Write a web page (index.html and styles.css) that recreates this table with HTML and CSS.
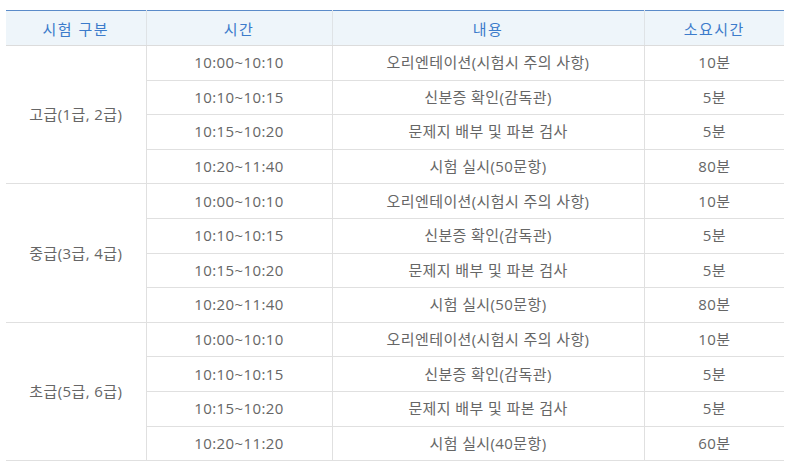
FILE: index.html
```html
<!DOCTYPE html>
<html lang="ko">
<head>
<meta charset="utf-8">
<link rel="stylesheet" href="styles.css">
</head>
<body>
<table class="sched">
  <colgroup>
    <col class="c1"><col class="c2"><col class="c3"><col class="c4">
  </colgroup>
  <thead>
    <tr><th>시험 구분</th><th>시간</th><th>내용</th><th>소요시간</th></tr>
  </thead>
  <tbody>
    <tr><td rowspan="4" class="grp">고급(1급, 2급)</td><td>10:00~10:10</td><td>오리엔테이션(시험시 주의 사항)</td><td>10분</td></tr>
    <tr><td>10:10~10:15</td><td>신분증 확인(감독관)</td><td>5분</td></tr>
    <tr><td>10:15~10:20</td><td>문제지 배부 및 파본 검사</td><td>5분</td></tr>
    <tr><td>10:20~11:40</td><td>시험 실시(50문항)</td><td>80분</td></tr>
    <tr><td rowspan="4" class="grp">중급(3급, 4급)</td><td>10:00~10:10</td><td>오리엔테이션(시험시 주의 사항)</td><td>10분</td></tr>
    <tr><td>10:10~10:15</td><td>신분증 확인(감독관)</td><td>5분</td></tr>
    <tr><td>10:15~10:20</td><td>문제지 배부 및 파본 검사</td><td>5분</td></tr>
    <tr><td>10:20~11:40</td><td>시험 실시(50문항)</td><td>80분</td></tr>
    <tr><td rowspan="4" class="grp">초급(5급, 6급)</td><td>10:00~10:10</td><td>오리엔테이션(시험시 주의 사항)</td><td>10분</td></tr>
    <tr><td>10:10~10:15</td><td>신분증 확인(감독관)</td><td>5분</td></tr>
    <tr><td>10:15~10:20</td><td>문제지 배부 및 파본 검사</td><td>5분</td></tr>
    <tr><td>10:20~11:20</td><td>시험 실시(40문항)</td><td>60분</td></tr>
  </tbody>
</table>
</body>
</html>
```
FILE: styles.css
```css
html, body {
  margin: 0;
  padding: 0;
  background: #fff;
}
body {
  padding: 10px 16px 0 6px;
  font-family: "Open Sans", "Noto Sans CJK KR", sans-serif;
  font-size: 15px;
  font-weight: 400;
  letter-spacing: 0.4px;
  color: #666;
}
.sched {
  width: 778px;
  border-collapse: collapse;
  table-layout: fixed;
  border-top: 1px solid #5b8bc9;
}
.c1 { width: 140px; }
.c2 { width: 186px; }
.c3 { width: 312px; }
.c4 { width: 140px; }
.sched th {
  height: 34px;
  padding: 0;
  background: #eef5fa;
  color: #3c7bcb;
  font-weight: normal;
  letter-spacing: 1.5px;
  text-align: center;
  border-left: 1px solid #dfe3e6;
  border-bottom: 1px solid #dcdcdc;
}
.sched th:first-child { border-left: none; }
.sched td {
  height: 33.6px;
  padding: 0;
  text-align: center;
  vertical-align: middle;
  border-left: 1px solid #e0e0e0;
  border-bottom: 1px solid #e0e0e0;
  line-height: 1;
}
.sched td.grp { border-left: none; }
```
